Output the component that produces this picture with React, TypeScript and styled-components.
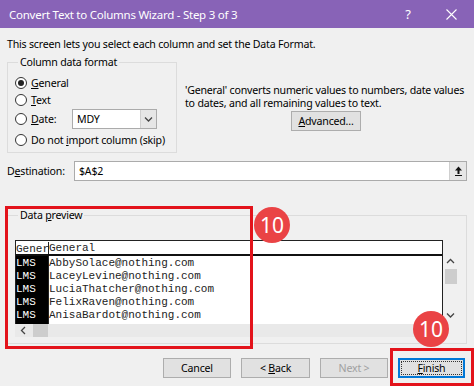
import styled, { createGlobalStyle } from "styled-components";

const GlobalStyle = createGlobalStyle`
  html, body {
    margin: 0;
    padding: 0;
    background: #f0f0f0;
  }
  * {
    box-sizing: border-box;
  }
`;

const Window = styled.div`
  position: relative;
  width: 474px;
  height: 386px;
  overflow: hidden;
  background: #f0f0f0;
  font-family: "Noto Sans", "Open Sans", sans-serif;
  font-size: 10.6px;
  letter-spacing: -0.2px;
  color: #000;
  white-space: nowrap;
`;

const TitleBar = styled.div`
  display: flex;
  align-items: center;
  height: 28px;
  padding: 0 9px;
  background: #8863b7;
  color: #fff;
  font-size: 11.5px;
  letter-spacing: -0.25px;
`;

const Title = styled.div`
  flex: 1;
`;

const TitleButton = styled.div<{ $w: number }>`
  display: flex;
  align-items: center;
  justify-content: center;
  width: ${(p) => p.$w}px;
  height: 28px;
  font-size: 13px;
`;

const Body = styled.div`
  padding: 7px 7px 0;
`;

const Intro = styled.div`
  line-height: 16px;
  padding-top: 1px;
`;

const TopRow = styled.div`
  display: flex;
  margin-top: 2px;
`;

const Group = styled.fieldset<{ $w?: number; $h: number }>`
  margin: 0;
  padding: 4px 7px 0;
  border: 1px solid #dcdcdc;
  width: ${(p) => (p.$w ? `${p.$w}px` : "auto")};
  height: ${(p) => p.$h}px;
  min-width: 0;
`;

const Legend = styled.legend`
  padding: 0 2px;
  margin-left: 3px;
  line-height: 16px;
`;

const RadioRow = styled.div<{ $h: number }>`
  display: flex;
  align-items: center;
  height: ${(p) => p.$h}px;
  gap: 4px;
`;

const Radio = styled.span<{ $on?: boolean }>`
  position: relative;
  width: 12px;
  height: 12px;
  border-radius: 50%;
  border: 1px solid #333;
  background: #fff;
  flex: none;
  &::after {
    content: "";
    display: ${(p) => (p.$on ? "block" : "none")};
    position: absolute;
    left: 2px;
    top: 2px;
    width: 6px;
    height: 6px;
    border-radius: 50%;
    background: #222;
  }
`;

const DateLabel = styled.span`
  width: 37px;
`;

const Combo = styled.div`
  display: flex;
  width: 85px;
  height: 20px;
  border: 1px solid #ababab;
  background: #fff;
`;

const ComboText = styled.div`
  flex: 1;
  padding-left: 4px;
  line-height: 18px;
`;

const ComboButton = styled.div`
  display: flex;
  align-items: center;
  justify-content: center;
  width: 16px;
  background: #e6e6e6;
  border-left: 1px solid #cfcfcf;
`;

const RightCol = styled.div`
  display: flex;
  flex: 1;
  flex-direction: column;
  padding: 30px 0 0 8px;
`;

const Description = styled.div`
  line-height: 13px;
`;

const Button = styled.button<{ $w?: number; $disabled?: boolean; $default?: boolean }>`
  width: ${(p) => p.$w || 68}px;
  height: 20px;
  padding: 0;
  font-family: inherit;
  font-size: inherit;
  letter-spacing: inherit;
  color: ${(p) => (p.$disabled ? "#a0a0a0" : "#000")};
  background: #e1e1e1;
  border: 1px solid ${(p) => (p.$default ? "#0078d7" : "#adadad")};
  outline: ${(p) => (p.$default ? "1px dotted #333" : "none")};
  outline-offset: -4px;
  box-shadow: ${(p) => (p.$default ? "inset 0 0 0 1px #0078d7" : "none")};
`;

const AdvancedWrap = styled.div`
  display: flex;
  justify-content: center;
  margin-top: 1px;
`;

const DestRow = styled.div`
  display: flex;
  align-items: center;
  margin-top: 8px;
`;

const DestLabel = styled.div`
  width: 67px;
`;

const DestInput = styled.div`
  display: flex;
  flex: 1;
  height: 20px;
  border: 1px solid #ababab;
  background: #fff;
`;

const DestValue = styled.div`
  flex: 1;
  padding-left: 4px;
  line-height: 18px;
`;

const DestButton = styled.div`
  display: flex;
  align-items: center;
  justify-content: center;
  width: 17px;
  background: #e6e6e6;
  border-left: 1px solid #cfcfcf;
`;

const PreviewGroup = styled.fieldset`
  margin: 26px 0 0;
  padding: 17px 8px 0 7px;
  height: 137px;
  min-width: 0;
  border: 1px solid #dcdcdc;
`;

const PreviewGrid = styled.div`
  display: grid;
  grid-template-columns: 1fr 15px;
  grid-template-rows: 84px 13px;
`;

const Sheet = styled.div`
  display: flex;
  flex-direction: column;
  border: 1px solid #222;
  border-bottom: none;
  background: #fff;
  font-family: "Liberation Mono", "Courier New", monospace;
  font-size: 11px;
  letter-spacing: 0;
  line-height: 13px;
  overflow: hidden;
`;

const SheetHead = styled.div`
  display: flex;
  height: 15px;
  padding-top: 1px;
  border-bottom: 2px solid #111;
`;

const SheetBody = styled.div`
  display: flex;
  flex: 1;
`;

const Column = styled.div<{ $dark?: boolean; $first?: boolean }>`
  width: ${(p) => (p.$first ? "33px" : "auto")};
  flex: ${(p) => (p.$first ? "none" : 1)};
  padding-top: ${(p) => (p.$first !== undefined ? 1 : 0)}px;
  border-right: ${(p) => (p.$first ? "1px solid #222" : "none")};
  background: ${(p) => (p.$dark ? "#000" : "#fff")};
  color: ${(p) => (p.$dark ? "#fff" : "#222")};
  overflow: hidden;
`;

const VScroll = styled.div`
  display: flex;
  flex-direction: column;
  align-items: center;
  padding: 18px 0 5px;
`;

const Thumb = styled.div<{ $w: number; $h: number }>`
  width: ${(p) => p.$w}px;
  height: ${(p) => p.$h}px;
  background: #cdcdcd;
  flex: none;
`;

const Spacer = styled.div`
  flex: 1;
`;

const UpThumb = styled(Thumb)`
  margin-top: 4px;
`;

const HScroll = styled.div`
  display: flex;
  align-items: center;
  gap: 6px;
  padding-left: 5px;
  background: #e9e9e9;
`;

const Footer = styled.div`
  display: flex;
  justify-content: flex-end;
  gap: 10px;
  margin-top: 14px;
  padding-right: 2px;
`;

const Highlight = styled.div<{ $x: number; $y: number; $w: number; $h: number }>`
  position: absolute;
  left: ${(p) => p.$x}px;
  top: ${(p) => p.$y}px;
  width: ${(p) => p.$w}px;
  height: ${(p) => p.$h}px;
  border: 3px solid #e3131b;
  pointer-events: none;
`;

const Badge = styled.div<{ $x: number; $y: number }>`
  position: absolute;
  left: ${(p) => p.$x}px;
  top: ${(p) => p.$y}px;
  width: 36px;
  height: 36px;
  border-radius: 50%;
  background: #ea4345;
  color: #fff;
  display: flex;
  align-items: center;
  justify-content: center;
  font-family: "Noto Sans", sans-serif;
  font-size: 21px;
  letter-spacing: 0;
`;

const Chevron = ({ dir }: { dir: "up" | "down" | "left" }) => {
  const d =
    dir === "up" ? "M1 5 L4.5 1.5 L8 5" : dir === "down" ? "M1 1.5 L4.5 5 L8 1.5" : "M5 1 L1.5 4.5 L5 8";
  const w = dir === "left" ? 7 : 9;
  const h = dir === "left" ? 9 : 7;
  return (
    <svg width={w} height={h} viewBox={`0 0 ${w} ${h}`}>
      <path d={d} fill="none" stroke="#444" strokeWidth="1.3" />
    </svg>
  );
};

const rows = [
  "AbbySolace@nothing.com",
  "LaceyLevine@nothing.com",
  "LuciaThatcher@nothing.com",
  "FelixRaven@nothing.com",
  "AnisaBardot@nothing.com",
];

const App = () => {
  return (
    <Window>
      <GlobalStyle />
      <TitleBar>
        <Title>Convert Text to Columns Wizard - Step 3 of 3</Title>
        <TitleButton $w={58}>?</TitleButton>
        <TitleButton $w={28}>
          <svg width="11" height="11" viewBox="0 0 11 11">
            <path d="M0.5 0.5 L10.5 10.5 M10.5 0.5 L0.5 10.5" stroke="#fff" strokeWidth="1.1" />
          </svg>
        </TitleButton>
      </TitleBar>
      <Body>
        <Intro>This screen lets you select each column and set the Data Format.</Intro>
        <TopRow>
          <Group $w={170} $h={99}>
            <Legend>Column data format</Legend>
            <RadioRow $h={17}>
              <Radio $on />
              <span>
                <u>G</u>eneral
              </span>
            </RadioRow>
            <RadioRow $h={17}>
              <Radio />
              <span>
                <u>T</u>ext
              </span>
            </RadioRow>
            <RadioRow $h={22}>
              <Radio />
              <DateLabel>
                <u>D</u>ate:
              </DateLabel>
              <Combo>
                <ComboText>MDY</ComboText>
                <ComboButton>
                  <Chevron dir="down" />
                </ComboButton>
              </Combo>
            </RadioRow>
            <RadioRow $h={20}>
              <Radio />
              <span>
                Do not <u>i</u>mport column (skip)
              </span>
            </RadioRow>
          </Group>
          <RightCol>
            <Description>
              'General' converts numeric values to numbers, date values
              <br />
              to dates, and all remaining values to text.
            </Description>
            <AdvancedWrap>
              <Button $w={70}>
                <u>A</u>dvanced...
              </Button>
            </AdvancedWrap>
          </RightCol>
        </TopRow>
        <DestRow>
          <DestLabel>
            D<u>e</u>stination:
          </DestLabel>
          <DestInput>
            <DestValue>$A$2</DestValue>
            <DestButton>
              <svg width="9" height="10" viewBox="0 0 9 10">
                <path d="M4.5 0.5 L8 4.5 H5.5 V8 H3.5 V4.5 H1 Z" fill="#111" />
                <rect x="1" y="9" width="7" height="1" fill="#111" />
              </svg>
            </DestButton>
          </DestInput>
        </DestRow>
        <PreviewGroup>
          <Legend>
            Data <u>p</u>review
          </Legend>
          <PreviewGrid>
            <Sheet>
              <SheetHead>
                <Column $first>Gener</Column>
                <Column>General</Column>
              </SheetHead>
              <SheetBody>
                <Column $first $dark>
                  {rows.map((r) => (
                    <div key={r}>LMS</div>
                  ))}
                </Column>
                <Column $first={false}>
                  {rows.map((r) => (
                    <div key={r}>{r}</div>
                  ))}
                </Column>
              </SheetBody>
            </Sheet>
            <VScroll>
              <Chevron dir="up" />
              <UpThumb $w={12} $h={15} />
              <Spacer />
              <Chevron dir="down" />
            </VScroll>
            <HScroll>
              <Chevron dir="left" />
              <Thumb $w={15} $h={13} />
            </HScroll>
          </PreviewGrid>
        </PreviewGroup>
        <Footer>
          <Button>Cancel</Button>
          <Button $w={69}>
            &lt; <u>B</u>ack
          </Button>
          <Button $disabled>Next &gt;</Button>
          <Button $w={67} $default>
            <u>F</u>inish
          </Button>
        </Footer>
      </Body>
      <Highlight $x={5} $y={206} $w={248} $h={143} />
      <Highlight $x={390} $y={348} $w={84} $h={38} />
      <Badge $x={254} $y={207}>10</Badge>
      <Badge $x={413} $y={311}>10</Badge>
    </Window>
  );
};

export default App;
